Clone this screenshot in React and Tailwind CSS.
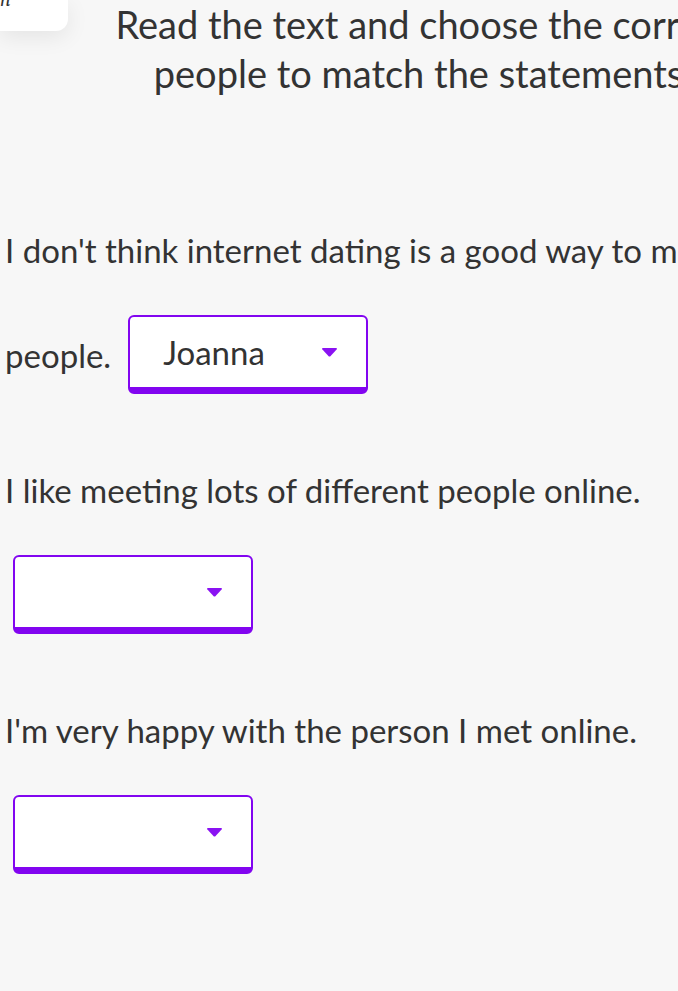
import React from 'react';

const Arrow = () => (
  <svg width="17" height="10" viewBox="0 0 17 10" className="shrink-0">
    <path d="M2 1 H15 Q16.6 1 15.6 2.4 L9.6 8.9 Q8.5 10 7.4 8.9 L1.4 2.4 Q0.4 1 2 1 Z" fill="#8a12f2" />
  </svg>
);

const Dropdown = ({ value, className = '' }) => (
  <div
    className={`flex h-[79px] w-[240px] shrink-0 items-center justify-between rounded-md border-2 border-b-[7px] border-[#8205f0] bg-white pl-[33px] pr-[28px] ${className}`}
  >
    <span className="text-[33px] leading-none text-[#333]">{value}</span>
    <Arrow />
  </div>
);

const App = () => {
  return (
    <div
      className="h-[991px] w-[678px] overflow-hidden bg-[#f7f7f7] text-[#333]"
      style={{ fontFamily: 'Lato, "Noto Sans", sans-serif' }}
    >
      <div className="w-[900px]">
        {/* header */}
        <div className="flex items-start">
          <div className="relative h-[31px] w-[68px] shrink-0 overflow-hidden rounded-br-xl bg-white shadow-[0_6px_22px_rgba(0,0,0,0.08)]">
            <span className="absolute -top-[10px] left-0 font-serif text-[20px] italic leading-none text-[#333]">n</span>
          </div>
          <h1 className="w-[710px] shrink-0 text-center text-[38px] font-normal leading-[49px]">
            Read the text and choose the correct
            <br />
            people to match the statements.
          </h1>
        </div>

        {/* questions */}
        <div className="mt-[128px] pl-[5px]">
          <div className="whitespace-nowrap text-[33px] leading-[48px]">
            I don't think internet dating is a good way to meet
          </div>
          <div className="mt-[41px] flex items-center">
            <span className="text-[33px] leading-[48px]">people.</span>
            <Dropdown value="Joanna" className="ml-[17px]" />
          </div>

          <div className="mt-[72px] whitespace-nowrap text-[33px] leading-[48px]">
            I like meeting lots of different people online.
          </div>
          <Dropdown value="" className="ml-[8px] mt-[41px]" />

          <div className="mt-[72px] whitespace-nowrap text-[33px] leading-[48px]">
            I'm very happy with the person I met online.
          </div>
          <Dropdown value="" className="ml-[8px] mt-[41px]" />
        </div>
      </div>
    </div>
  );
};

export default App;
